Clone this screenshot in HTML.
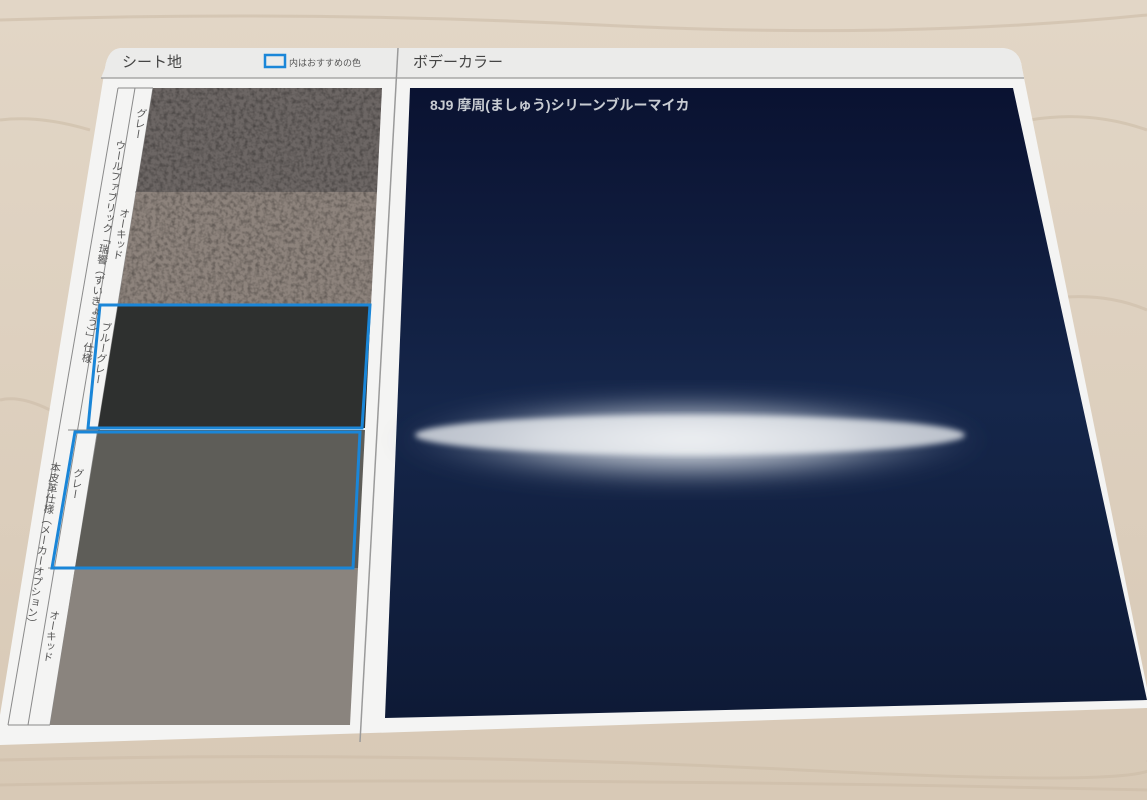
<!DOCTYPE html>
<html><head><meta charset="utf-8"><style>
html,body{margin:0;padding:0;width:1147px;height:800px;overflow:hidden;background:#dccfbe}
svg{display:block}
.jp{font-family:"Liberation Sans","Noto Sans CJK JP",sans-serif}
</style></head><body>
<svg width="1147" height="800" viewBox="0 0 1147 800" xmlns="http://www.w3.org/2000/svg">
<defs>
<linearGradient id="wood" x1="0" y1="0" x2="0" y2="1">
<stop offset="0" stop-color="#e2d6c6"/><stop offset="1" stop-color="#d8c9b6"/></linearGradient>
<radialGradient id="hl" cx="0.5" cy="0.5" r="0.5">
<stop offset="0" stop-color="#ffffff" stop-opacity="0.95"/><stop offset="0.5" stop-color="#dfe6ee" stop-opacity="0.6"/><stop offset="1" stop-color="#4a5d80" stop-opacity="0"/></radialGradient>
<linearGradient id="navy" x1="0" y1="0" x2="0" y2="1">
<stop offset="0" stop-color="#0a1231"/><stop offset="0.5" stop-color="#15264a"/><stop offset="1" stop-color="#0e1a36"/></linearGradient>
<filter id="bl"><feGaussianBlur stdDeviation="10"/></filter>
<filter id="bl2"><feGaussianBlur stdDeviation="3"/></filter>
<filter id="grain" x="0" y="0" width="100%" height="100%">
<feTurbulence type="fractalNoise" baseFrequency="0.25" numOctaves="2" seed="3"/>
<feColorMatrix type="matrix" values="0 0 0 0 0  0 0 0 0 0  0 0 0 0 0  1.4 0 0 0 -0.55"/>
<feComposite operator="in" in2="SourceGraphic"/>
</filter>
</defs>
<rect width="1147" height="800" fill="url(#wood)"/>
<g stroke="#cdbda8" stroke-width="3" fill="none" opacity="0.6">
<path d="M0 20 Q300 10 600 25 T1147 15"/><path d="M0 760 Q400 750 800 770 T1147 760"/><path d="M0 785 Q500 775 1147 790"/>
<path d="M1030 120 Q1090 110 1147 130"/><path d="M1040 300 Q1100 290 1147 310"/><path d="M0 120 Q40 115 90 130"/><path d="M0 400 Q20 395 50 410"/>
</g>
<path d="M122 48 L1000 48 Q1020 48 1022 68 L1147 688 L1147 708 L0 745 L0 715 L105 68 Q108 48 122 48 Z" fill="#f4f4f3"/>
<path d="M122 48 L1000 48 Q1020 48 1022 68 L1024 78 L101 78 L105 68 Q108 48 122 48 Z" fill="#ebebea"/>
<line x1="101" y1="78" x2="1024" y2="78" stroke="#999" stroke-width="1.2"/>
<line x1="398" y1="48" x2="360" y2="742" stroke="#9a9a9a" stroke-width="1.5"/>
<text x="122" y="67" class="jp" font-size="15" fill="#444">シート地</text>
<rect x="265" y="55" width="20" height="12" fill="none" stroke="#1a86d8" stroke-width="2.5"/>
<text x="289" y="66" class="jp" font-size="9" fill="#555">内はおすすめの色</text>
<text x="413" y="67" class="jp" font-size="15" fill="#444">ボデーカラー</text>
<g stroke="#8a8a8a" stroke-width="1" fill="none">
<line x1="118" y1="88" x2="8" y2="725"/>
<line x1="135" y1="88" x2="28" y2="725"/>
<line x1="153" y1="88" x2="50" y2="725"/>
<line x1="118" y1="88" x2="153" y2="88"/>
<line x1="8" y1="725" x2="50" y2="725"/>
<line x1="135" y1="192" x2="153" y2="192"/>
<line x1="117" y1="305" x2="136" y2="305"/>
<line x1="68" y1="430" x2="100" y2="430"/>
<line x1="48" y1="568" x2="76" y2="568"/>
</g>
<g>
<polygon points="153,88 382,88 377,192 136,192" fill="#6c6664"/>
<polygon points="136,192 377,192 371,305 118,305" fill="#8d837c"/>
<polygon points="118,305 371,305 365,428 98,428" fill="#2e302f"/>
<polygon points="98,430 365,430 358,568 75,568" fill="#5e5d58"/>
<polygon points="75,568 358,568 350,725 50,725" fill="#8a847e"/>
</g>
<g filter="url(#grain)" opacity="0.45">
<polygon points="153,88 382,88 371,305 118,305" fill="#000"/>
</g>
<polygon points="100,305 370,305 362,428 88,428" fill="none" stroke="#1a86d8" stroke-width="3"/>
<polygon points="75,432 360,432 353,568 52,568" fill="none" stroke="#1a86d8" stroke-width="3"/>
<g class="jp" font-size="10.5" fill="#555">
<text x="142" y="108" style="writing-mode:vertical-rl" transform="rotate(9 142 108)">グレー</text>
<text x="121" y="140" style="writing-mode:vertical-rl" transform="rotate(9 121 140)">ウールファブリック「瑞響（ずいきょう）」仕様</text>
<text x="125" y="208" style="writing-mode:vertical-rl" transform="rotate(9 125 208)">オーキッド</text>
<text x="107" y="322" style="writing-mode:vertical-rl" transform="rotate(9 107 322)">ブルーグレー</text>
<text x="79" y="468" style="writing-mode:vertical-rl" transform="rotate(9 79 468)">グレー</text>
<text x="56" y="462" style="writing-mode:vertical-rl" transform="rotate(9 56 462)">本皮革仕様（メーカーオプション）</text>
<text x="55" y="610" style="writing-mode:vertical-rl" transform="rotate(9 55 610)">オーキッド</text>
</g>
<polygon points="410,88 1013,88 1147,700 385,718" fill="url(#navy)"/>
<ellipse cx="690" cy="440" rx="300" ry="50" fill="url(#hl)" filter="url(#bl)"/>
<ellipse cx="690" cy="435" rx="275" ry="20" fill="#f2f4f6" opacity="0.75" filter="url(#bl2)"/>
<text x="430" y="110" class="jp" font-size="14" font-weight="bold" fill="#c8ccd2">8J9  摩周(ましゅう)シリーンブルーマイカ</text>
</svg>
</body></html>
